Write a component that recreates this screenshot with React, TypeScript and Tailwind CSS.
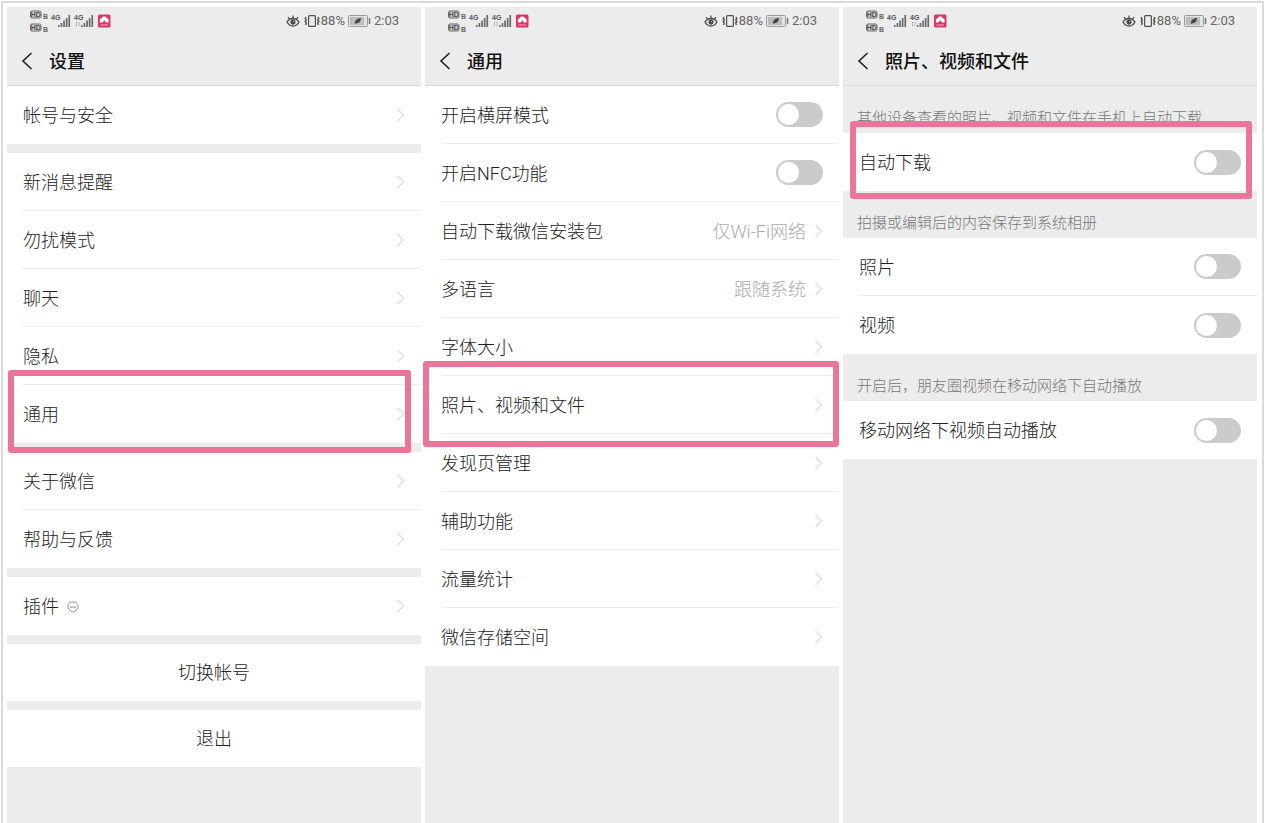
import React, { useState } from 'react';
import { clsx } from 'clsx';

type RowItem = {
    label: string;
    value?: string;
    toggle?: boolean;
    badge?: boolean;
    highlight?: string;
};

const accountGroups: RowItem[][] = [
    [{ label: '帐号与安全' }],
    [
        { label: '新消息提醒' },
        { label: '勿扰模式' },
        { label: '聊天' },
        { label: '隐私' },
        { label: '通用', highlight: '-top-[15px] -bottom-[10px] left-px right-[10px]' },
    ],
    [{ label: '关于微信' }, { label: '帮助与反馈' }],
    [{ label: '插件', badge: true }],
];

const generalItems: RowItem[] = [
    { label: '开启横屏模式', toggle: true },
    { label: '开启NFC功能', toggle: true },
    { label: '自动下载微信安装包', value: '仅Wi-Fi网络' },
    { label: '多语言', value: '跟随系统' },
    { label: '字体大小' },
    { label: '照片、视频和文件', highlight: '-top-[15px] -bottom-[13px] -left-[2px] right-0' },
    { label: '发现页管理' },
    { label: '辅助功能' },
    { label: '流量统计' },
    { label: '微信存储空间' },
];

const mediaGroups: { caption: string; items: RowItem[] }[] = [
    {
        caption: '其他设备查看的照片、视频和文件在手机上自动下载',
        items: [{ label: '自动下载', toggle: true, highlight: '-top-[12px] -bottom-[8px] left-[7px] right-[5px]' }],
    },
    {
        caption: '拍摄或编辑后的内容保存到系统相册',
        items: [
            { label: '照片', toggle: true },
            { label: '视频', toggle: true },
        ],
    },
    {
        caption: '开启后，朋友圈视频在移动网络下自动播放',
        items: [{ label: '移动网络下视频自动播放', toggle: true }],
    },
];

const HdMark = ({ y }: { y: number }) => (
    <g>
        <rect x="1.5" y={y} width="10.5" height="7" rx="1.5" fill="#d8d8d8" stroke="#666" />
        <text x="6.700" y={y + 6} fontSize="7" fontWeight="700" textAnchor="middle" fill="#4a4a4a">HD</text>
        <text x="14" y={y + 8} fontSize="7" fontWeight="700" fill="#666">B</text>
    </g>
);

const Bars = ({ x }: { x: number }) => (
    <g fill="#6a6a6a">
        <rect x={x} y="16" width="1.5" height="2" />
        <rect x={x + 2.6} y="14" width="1.7" height="4" />
        <rect x={x + 5.2} y="11.5" width="1.7" height="6.5" />
        <rect x={x + 7.8} y="9" width="1.7" height="9" />
        <rect x={x + 10.4} y="6" width="1.7" height="12" />
    </g>
);

const SignalIcons = () => (
    <svg width="82" height="24" viewBox="0 0 82 24" className="font-['Liberation_Sans',sans-serif]" aria-hidden="true">
        <HdMark y={2} />
        <HdMark y={15} />
        <text x="22" y="11" fontSize="7" fontWeight="700" fill="#555">4G</text>
        <Bars x={29} />
        <text x="45" y="11" fontSize="7" fontWeight="700" fill="#555">4G</text>
        <path d="M47.5 13v5M50 13v5" stroke="#999" strokeWidth="1" strokeDasharray="1.5 1" />
        <Bars x={52} />
        <rect x="69" y="5.5" width="12.5" height="13" rx="1.5" fill="#dc3560" />
        <path d="M71 13.500c-.6-2.600 0-4 1.500-4.300.5-1.200 1.500-1.700 2.750-1.700s2.250.5 2.750 1.700c1.500.3 2.100 1.700 1.500 4.300h-2.600l-1.650-2.200-1.650 2.200z" fill="#fff" />
        <path d="M71.500 16h7.500" stroke="#f3a9bc" strokeWidth="1" />
    </svg>
);

const EyeIcon = () => (
    <svg width="14" height="14" viewBox="0 0 14 14" fill="none" stroke="#4a4a4a" aria-hidden="true">
        <path d="M1 8c1.500-2.400 3.500-3.500 6-3.500S11.500 5.600 13 8c-1.500 2.700-3.500 4-6 4S2.500 10.700 1 8z" strokeWidth="1.300" />
        <circle cx="7" cy="8" r="2.200" fill="#4a4a4a" />
        <path d="M7 4.500V1.500M3.500 5.200L2 3M10.500 5.200L12 3" strokeWidth="1.200" />
        <circle cx="7.500" cy="7.500" r=".5" fill="#eee" stroke="none" />
    </svg>
);

const VibrateIcon = () => (
    <svg width="16" height="14" viewBox="0 0 16 14" fill="none" stroke="#505050" aria-hidden="true">
        <rect x="4.600" y="1.600" width="6.800" height="10.800" rx="1" strokeWidth="1.200" />
        <path d="M2 3l-.8 1.500L2.300 6l-1.100 1.500L2.300 9l-.8 2M14 3l.8 1.500L13.700 6l1.100 1.500L13.700 9l.8 2" strokeWidth="1.400" />
    </svg>
);

const BatteryIcon = () => (
    <svg width="23" height="12" viewBox="0 0 23 12" aria-hidden="true">
        <rect x=".5" y=".5" width="19" height="11" rx="1" fill="#e4e4e4" stroke="#9a9a9a" />
        <rect x="2" y="2" width="14" height="8" fill="#bcbcbc" />
        <path d="M7 9C6.500 5.500 8.500 3.500 13 3 12.800 6.500 11 8.500 8.200 8.200L7 9z" fill="#444" />
        <path d="M21.500 3v6" stroke="#777" strokeWidth="1.500" />
    </svg>
);

const StatusBar = () => (
    <div className="flex h-7 items-center justify-between px-[22px]">
        <SignalIcons />
        <div className="flex items-center font-[Roboto,sans-serif] text-[13px] text-[#666]">
            <EyeIcon />
            <span className="ml-1 flex items-center gap-px">
                <VibrateIcon />
                <span>88%</span>
            </span>
            <span className="mx-[3px]">
                <BatteryIcon />
            </span>
            <span>2:03</span>
        </div>
    </div>
);

const Chevron = () => (
    <svg width="9" height="14" viewBox="0 0 9 14" fill="none" stroke="#dcdcdc" strokeWidth="1.200" aria-hidden="true">
        <path d="M1.500 1l6 6-6 6" />
    </svg>
);

const LampIcon = () => (
    <svg width="12" height="12" viewBox="0 0 12 12" fill="none" stroke="#888" strokeWidth=".9" aria-hidden="true">
        <path d="M3.200 1h5.600L11 3.800v2.800L9.200 9.400 6 11.200 2.800 9.400 1 6.600V3.800z" strokeLinejoin="round" />
        <path d="M3.700 5v1.300l1.200.5L6 5.500l1.100 1.300 1.200-.5V5" />
    </svg>
);

const Row = ({ item, last }: { item: RowItem; last: boolean }) => {
    const [on, setOn] = useState(false);
    const Tag = item.toggle ? 'label' : 'button';

    return (
        <li className="relative bg-white pl-4">
            <Tag
                className={clsx(
                    'flex h-[58px] w-full items-center pr-4 text-left text-lg font-light',
                    !last && 'border-b border-[#ededed]'
                )}
            >
                <span className="flex flex-1 items-center gap-2 pt-0.5 text-[#222]">
                    {item.label}
                    {item.badge && <LampIcon />}
                </span>
                {item.value && <span className="mr-2 pt-0.5 text-[#aaa]">{item.value}</span>}
                {item.toggle ? (
                    <span className="relative flex">
                        <input
                            type="checkbox"
                            role="switch"
                            checked={on}
                            onChange={() => setOn(!on)}
                            className="h-[25px] w-[47px] appearance-none rounded-full bg-[#cbcbcb] checked:bg-[#07c160]"
                        />
                        <span
                            className={clsx(
                                'pointer-events-none absolute top-[2px] size-[21px] rounded-full bg-white',
                                on ? 'right-[2px]' : 'left-[2px]'
                            )}
                        />
                    </span>
                ) : (
                    <Chevron />
                )}
            </Tag>
            {item.highlight && (
                <span
                    className={clsx(
                        'pointer-events-none absolute z-10 rounded-[3px] border-[6px] border-[#ea7599]',
                        item.highlight
                    )}
                />
            )}
        </li>
    );
};

const Group = ({ items }: { items: RowItem[] }) => (
    <ul>
        {items.map((item, i) => (
            <Row key={item.label} item={item} last={i === items.length - 1} />
        ))}
    </ul>
);

const Screen = ({ title, children }: { title: string; children: React.ReactNode }) => (
    <section className="min-w-0 bg-[#ececec]">
        <header className="border-b border-[#dcdcdc]">
            <StatusBar />
            <div className="flex h-[50px] items-center gap-4 pt-0.5 pl-[14px]">
                <button aria-label="返回">
                    <svg width="12" height="18" viewBox="0 0 12 18" fill="none" stroke="#222" strokeWidth="1.600">
                        <path d="M10.500 1L2 9l8.500 8" />
                    </svg>
                </button>
                <h1 className="pt-0.5 text-lg font-medium text-[#111]">{title}</h1>
            </div>
        </header>
        {children}
    </section>
);

export default function App() {
    return (
        <div className="min-h-screen bg-white px-px pt-px font-[Roboto,'Noto_Sans_CJK_SC',sans-serif]">
            <main className="grid min-h-[calc(100vh-1px)] grid-cols-3 gap-1 border-x-2 border-t-2 border-[#dadada] pt-1 pr-[5px] pl-1">
                <Screen title="设置">
                    <div className="flex flex-col gap-[9px]">
                        {accountGroups.map((items) => (
                            <Group key={items[0].label} items={items} />
                        ))}
                        <button className="h-[57px] bg-white text-lg font-light text-[#222]">切换帐号</button>
                        <button className="h-[57px] bg-white text-lg font-light text-[#222]">退出</button>
                    </div>
                </Screen>

                <Screen title="通用">
                    <Group items={generalItems} />
                </Screen>

                <Screen title="照片、视频和文件">
                    {mediaGroups.map((group) => (
                        <div key={group.caption}>
                            <h2 className="flex h-[47px] items-end pb-1 pl-[14px] text-[15px] font-light whitespace-nowrap text-[#777]">
                                {group.caption}
                            </h2>
                            <Group items={group.items} />
                        </div>
                    ))}
                </Screen>
            </main>
        </div>
    );
}
